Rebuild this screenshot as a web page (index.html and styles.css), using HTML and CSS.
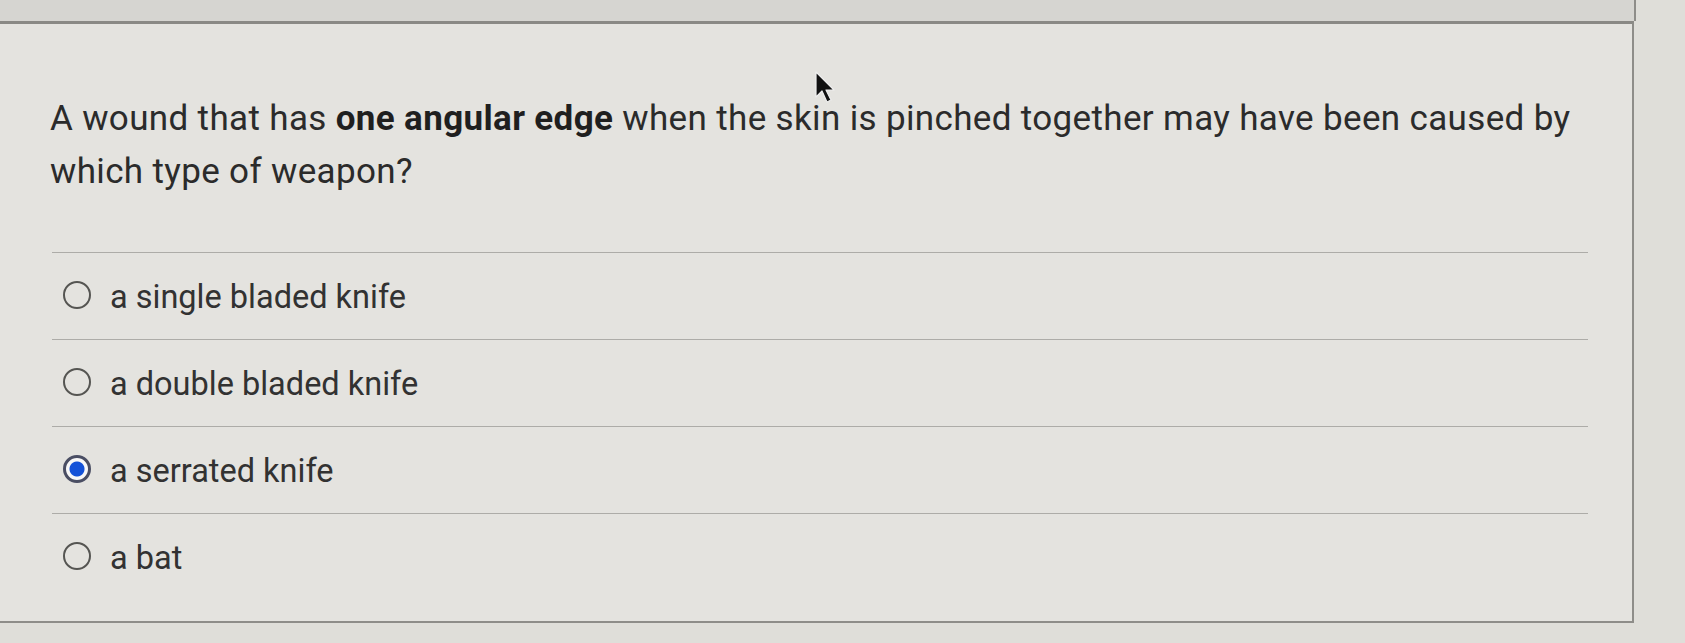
FILE: index.html
```html
<!DOCTYPE html>
<html lang="en">
<head>
<meta charset="utf-8">
<title>Question</title>
<link rel="stylesheet" href="styles.css">
</head>
<body>
<div class="top"></div>
<div class="panel">
  <p class="question">A wound that has <strong>one angular edge</strong> when the skin is pinched together may have been caused by which type of weapon?</p>
  <ul class="options">
    <li class="option"><span class="radio"></span><span class="label">a single bladed knife</span></li>
    <li class="option"><span class="radio"></span><span class="label">a double bladed knife</span></li>
    <li class="option"><span class="radio checked"></span><span class="label">a serrated knife</span></li>
    <li class="option"><span class="radio"></span><span class="label">a bat</span></li>
  </ul>
  <svg class="cursor" width="22" height="34" viewBox="0 0 22 34"><path d="M1 1 L1 26 L7 20 L12 31 L16 29 L11 19 L19 19 Z" fill="#111" stroke="#eee" stroke-width="1.2" stroke-linejoin="round"/></svg>
</div>
</body>
</html>
```
FILE: styles.css
```css
html, body {
  margin: 0;
  padding: 0;
}
body {
  background: #dfded9;
  font-family: Roboto, "Liberation Sans", sans-serif;
  width: 1685px;
  height: 643px;
  overflow: hidden;
}
.top {
  height: 21px;
  background: #d6d5d1;
  width: 1634px;
  border-right: 2px solid #8e8d89;
}
.panel {
  position: relative;
  width: 1634px;
  height: 602px;
  box-sizing: border-box;
  background: #e4e3df;
  border-top: 3px solid #8a8985;
  border-right: 2px solid #8e8d89;
  border-bottom: 2px solid #8e8d89;
  padding: 68px 0 0 50px;
}
.question {
  margin: 0;
  width: 1550px;
  font-size: 35px;
  line-height: 53px;
  letter-spacing: 0.35px;
  color: #2b2b2b;
}
.question strong {
  font-weight: 700;
  color: #1f1f1f;
}
.options {
  list-style: none;
  margin: 54px 0 0 2px;
  padding: 0;
  width: 1536px;
}
.option {
  display: flex;
  align-items: center;
  height: 87px;
  box-sizing: border-box;
  border-top: 1px solid #adaca8;
  padding-bottom: 3px;
}
.radio {
  width: 24px;
  height: 24px;
  border: 2px solid #555552;
  border-radius: 50%;
  margin-left: 11px;
  flex: none;
  background: transparent;
}
.radio.checked {
  width: 22px;
  height: 22px;
  border: 3px solid #4a4e63;
  background: radial-gradient(circle, #1452d8 0 7px, #f8f8f8 8px);
}
.label {
  margin-left: 19px;
  font-size: 32.5px;
  color: #323232;
  padding-top: 4px;
}
.cursor {
  position: absolute;
  left: 815px;
  top: 47px;
}
```
